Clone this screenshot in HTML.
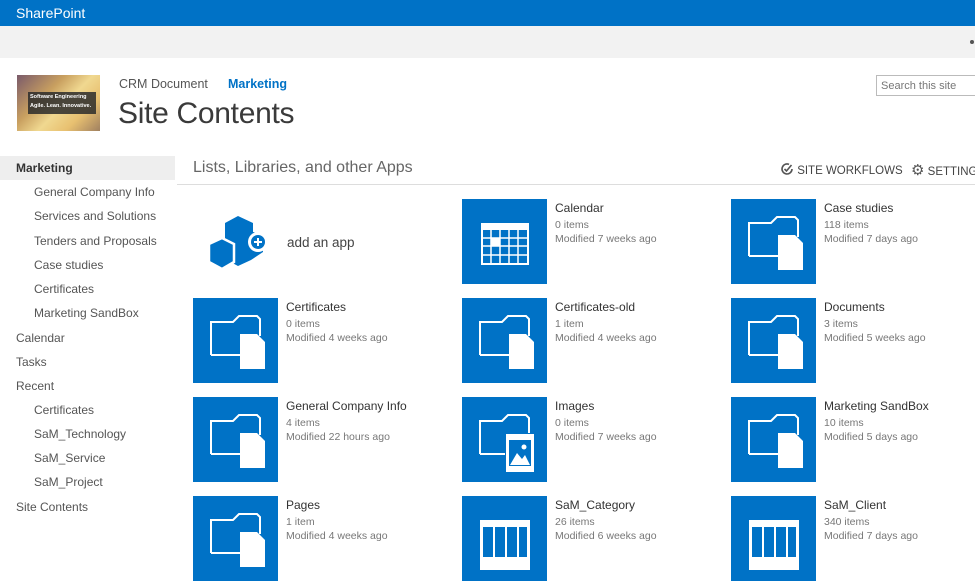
<!DOCTYPE html>
<html><head><meta charset="utf-8"><style>
*{margin:0;padding:0;box-sizing:border-box}
body{width:975px;height:544px;overflow:hidden;background:#fff;font-family:"Liberation Sans",sans-serif;position:relative;color:#444}
.a{position:absolute;white-space:nowrap}
.top{left:0;top:0;width:975px;height:26px;background:#0072c6}
.gray{left:0;top:26px;width:975px;height:32px;background:#f2f2f2}
.nav{font-size:12px;color:#555}
.sub{left:34px}
.tile{position:absolute;width:85px;height:85px;background:#0072c6}
.tt{font-size:12px;color:#333}
.ti{font-size:10.5px;color:#777}
</style></head><body>
<div class="a top"></div>
<div class="a" style="left:16px;top:5px;color:#fff;font-size:14px">SharePoint</div>
<div class="a gray"></div>
<div class="a" style="left:970px;top:40px;width:4px;height:4px;background:#555;border-radius:2px"></div>

<div class="a" style="left:17px;top:75px;width:83px;height:56px;background:linear-gradient(135deg,#7a5a6a 0%,#c9a060 35%,#f0d890 55%,#e8c070 75%,#a08060 100%)"></div>
<div class="a" style="left:28px;top:92px;width:68px;height:22px;background:#2b2b2b;opacity:.85"></div>
<div class="a" style="left:30px;top:93px;color:#fff;font-size:5.5px;font-weight:bold;line-height:9px">Software Engineering<br>Agile. Lean. Innovative.</div>

<div class="a" style="left:119px;top:77px;font-size:12.5px;color:#555">CRM Document</div>
<div class="a" style="left:228px;top:77px;font-size:12.5px;color:#0072c6;font-weight:bold">Marketing</div>
<div class="a" style="left:118px;top:97px;font-size:30px;color:#3a3a3a;font-weight:300;letter-spacing:-0.3px">Site Contents</div>
<div class="a" style="left:876px;top:75px;width:110px;height:21px;border:1px solid #bbb;font-size:11px;color:#777;padding:4px 4px">Search this site</div>

<div class="a" style="left:0;top:156px;width:175px;height:24px;background:#eee"></div>
<div class="a nav" style="left:16px;top:161px;font-weight:bold;color:#333">Marketing</div>
<div class="a nav sub" style="top:185px">General Company Info</div>
<div class="a nav sub" style="top:209px">Services and Solutions</div>
<div class="a nav sub" style="top:234px">Tenders and Proposals</div>
<div class="a nav sub" style="top:258px">Case studies</div>
<div class="a nav sub" style="top:282px">Certificates</div>
<div class="a nav sub" style="top:306px">Marketing SandBox</div>
<div class="a nav" style="left:16px;top:331px">Calendar</div>
<div class="a nav" style="left:16px;top:355px">Tasks</div>
<div class="a nav" style="left:16px;top:379px">Recent</div>
<div class="a nav sub" style="top:403px">Certificates</div>
<div class="a nav sub" style="top:427px">SaM_Technology</div>
<div class="a nav sub" style="top:451px">SaM_Service</div>
<div class="a nav sub" style="top:475px">SaM_Project</div>
<div class="a nav" style="left:16px;top:500px">Site Contents</div>

<div class="a" style="left:193px;top:159px;font-size:16px;color:#666">Lists, Libraries, and other Apps</div>
<div class="a" style="left:177px;top:184px;width:798px;height:1px;background:#ddd"></div>
<div class="a" style="left:780px;top:162px;font-size:11.5px;color:#444"><svg width="14" height="14" viewBox="0 0 14 14" style="vertical-align:-2px"><path d="M12 7A5 5 0 1 1 9 2.4" fill="none" stroke="#555" stroke-width="1.6"/><path d="M4.5 7l2 2 5-6" fill="none" stroke="#555" stroke-width="1.6"/></svg> SITE WORKFLOWS</div>
<div class="a" style="left:911px;top:161px;font-size:11.5px;color:#444"><span style="font-size:15px;color:#555">⚙</span> SETTINGS</div>

<svg class="a" style="left:207px;top:214px" width="64" height="60" viewBox="0 0 64 60"><polygon points="31,2 46,9 46,18 50,19 56,22 56,38 44,46 31,52 18,45 18,9" fill="#0072c6"/><polygon points="15,24 27,30 27,48 15,55 2,48 2,30" fill="#0072c6" stroke="#fff" stroke-width="2.5"/><circle cx="51" cy="28" r="10" fill="#fff"/><circle cx="51" cy="28" r="7" fill="#0072c6"/><path d="M51 24v8M47 28h8" stroke="#fff" stroke-width="2"/></svg>
<div class="a" style="left:287px;top:235px;font-size:13.5px;color:#444">add an app</div>

<svg width="0" height="0" style="position:absolute"><defs>
<g id="fol"><path d="M18 57V24H40L46 18H64L67 21V38M47 57H18" fill="none" stroke="#fff" stroke-width="2"/><path d="M47 36H64L72 44V71H47Z" fill="#fff"/></g>
</defs></svg>

<div class="tile" style="left:462px;top:199px"><svg width="85" height="85"><rect x="20" y="25" width="46" height="40" fill="none" stroke="#fff" stroke-width="2"/><rect x="20" y="25" width="46" height="6" fill="#fff"/><path d="M29 31v34M38 31v34M47 31v34M56 31v34M20 39h46M20 47h46M20 56h46" stroke="#fff" stroke-width="1.5"/><rect x="29" y="39" width="9" height="8" fill="#fff"/></svg></div>
<div class="a tt" style="left:555px;top:201px">Calendar</div>
<div class="a ti" style="left:555px;top:219px">0 items</div>
<div class="a ti" style="left:555px;top:233px">Modified 7 weeks ago</div>

<div class="tile" style="left:731px;top:199px"><svg width="85" height="85"><use href="#fol"/></svg></div>
<div class="a tt" style="left:824px;top:201px">Case studies</div>
<div class="a ti" style="left:824px;top:219px">118 items</div>
<div class="a ti" style="left:824px;top:233px">Modified 7 days ago</div>

<div class="tile" style="left:193px;top:298px"><svg width="85" height="85"><use href="#fol"/></svg></div>
<div class="a tt" style="left:286px;top:300px">Certificates</div>
<div class="a ti" style="left:286px;top:318px">0 items</div>
<div class="a ti" style="left:286px;top:332px">Modified 4 weeks ago</div>

<div class="tile" style="left:462px;top:298px"><svg width="85" height="85"><use href="#fol"/></svg></div>
<div class="a tt" style="left:555px;top:300px">Certificates-old</div>
<div class="a ti" style="left:555px;top:318px">1 item</div>
<div class="a ti" style="left:555px;top:332px">Modified 4 weeks ago</div>

<div class="tile" style="left:731px;top:298px"><svg width="85" height="85"><use href="#fol"/></svg></div>
<div class="a tt" style="left:824px;top:300px">Documents</div>
<div class="a ti" style="left:824px;top:318px">3 items</div>
<div class="a ti" style="left:824px;top:332px">Modified 5 weeks ago</div>

<div class="tile" style="left:193px;top:397px"><svg width="85" height="85"><use href="#fol"/></svg></div>
<div class="a tt" style="left:286px;top:399px">General Company Info</div>
<div class="a ti" style="left:286px;top:417px">4 items</div>
<div class="a ti" style="left:286px;top:431px">Modified 22 hours ago</div>

<div class="tile" style="left:462px;top:397px"><svg width="85" height="85"><path d="M18 57V24H40L46 18H64L67 21V36M43 57H18" fill="none" stroke="#fff" stroke-width="2"/><rect x="44" y="37" width="28" height="38" fill="#fff"/><rect x="47" y="43" width="22" height="26" fill="#0072c6"/><path d="M48 68L55 56L60 62L63 58L68 68Z" fill="#fff"/><circle cx="62" cy="50" r="2.5" fill="#fff"/></svg></div>
<div class="a tt" style="left:555px;top:399px">Images</div>
<div class="a ti" style="left:555px;top:417px">0 items</div>
<div class="a ti" style="left:555px;top:431px">Modified 7 weeks ago</div>

<div class="tile" style="left:731px;top:397px"><svg width="85" height="85"><use href="#fol"/></svg></div>
<div class="a tt" style="left:824px;top:399px">Marketing SandBox</div>
<div class="a ti" style="left:824px;top:417px">10 items</div>
<div class="a ti" style="left:824px;top:431px">Modified 5 days ago</div>

<div class="tile" style="left:193px;top:496px"><svg width="85" height="85"><use href="#fol"/></svg></div>
<div class="a tt" style="left:286px;top:498px">Pages</div>
<div class="a ti" style="left:286px;top:516px">1 item</div>
<div class="a ti" style="left:286px;top:530px">Modified 4 weeks ago</div>

<div class="tile" style="left:462px;top:496px"><svg width="85" height="85"><rect x="18" y="24" width="50" height="50" fill="#fff"/><rect x="21" y="31" width="10" height="30" fill="#0072c6"/><rect x="33" y="31" width="10" height="30" fill="#0072c6"/><rect x="45" y="31" width="10" height="30" fill="#0072c6"/><rect x="57" y="31" width="8" height="30" fill="#0072c6"/></svg></div>
<div class="a tt" style="left:555px;top:498px">SaM_Category</div>
<div class="a ti" style="left:555px;top:516px">26 items</div>
<div class="a ti" style="left:555px;top:530px">Modified 6 weeks ago</div>

<div class="tile" style="left:731px;top:496px"><svg width="85" height="85"><rect x="18" y="24" width="50" height="50" fill="#fff"/><rect x="21" y="31" width="10" height="30" fill="#0072c6"/><rect x="33" y="31" width="10" height="30" fill="#0072c6"/><rect x="45" y="31" width="10" height="30" fill="#0072c6"/><rect x="57" y="31" width="8" height="30" fill="#0072c6"/></svg></div>
<div class="a tt" style="left:824px;top:498px">SaM_Client</div>
<div class="a ti" style="left:824px;top:516px">340 items</div>
<div class="a ti" style="left:824px;top:530px">Modified 7 days ago</div>
</body></html>
